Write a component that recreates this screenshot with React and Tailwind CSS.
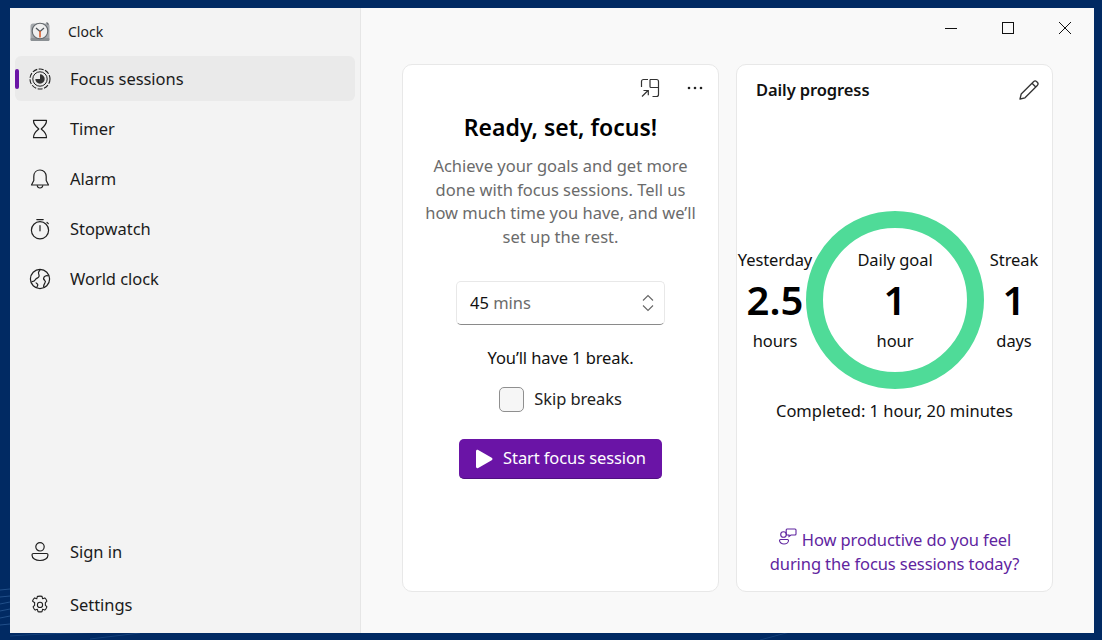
import React from 'react';

const FocusIcon = () => (
  <svg width="24" height="24" viewBox="0 0 24 24" fill="none" stroke="#1f1f1f">
    <circle cx="12" cy="12" r="10" strokeWidth="1.100" strokeDasharray="5 1.500" />
    <circle cx="12" cy="12" r="7.200" strokeWidth="1" />
    <path d="M12 7.300A4.700 4.700 0 1 1 7.300 12H12Z" fill="#333" stroke="none" />
  </svg>
);

const TimerIcon = () => (
  <svg width="24" height="24" viewBox="0 0 24 24" fill="none" stroke="#1f1f1f" strokeWidth="1.200" strokeLinejoin="round">
    <path d="M5.500 3.300h13c.2 3.300-2.300 6.300-5.300 8.700 3 2.400 5.500 5.400 5.300 8.700h-13c-.2-3.300 2.300-6.300 5.300-8.700-3-2.400-5.500-5.400-5.300-8.700Z" />
  </svg>
);

const BellIcon = () => (
  <svg width="24" height="24" viewBox="0 0 24 24" fill="none" stroke="#1f1f1f" strokeWidth="1.200" strokeLinejoin="round">
    <path d="M12 3c-3.700 0-6.200 2.800-6.200 6.500v4L3.500 18h17l-2.300-4.500v-4C18.200 5.800 15.700 3 12 3Z" />
    <path d="M9.200 18.200c.2 1.700 1.300 2.800 2.800 2.800s2.600-1.100 2.800-2.800" />
  </svg>
);

const StopwatchIcon = () => (
  <svg width="24" height="24" viewBox="0 0 24 24" fill="none" stroke="#1f1f1f" strokeWidth="1.200" strokeLinecap="round">
    <circle cx="12" cy="13.300" r="8.600" />
    <path d="M8.800 2.600h6.400M12 8.500v5.300M19 5.300l1.300 1.300" />
  </svg>
);

const GlobeIcon = () => (
  <svg width="24" height="24" viewBox="0 0 24 24" fill="none" stroke="#1f1f1f" strokeWidth="1.200" strokeLinejoin="round">
    <circle cx="12" cy="12" r="9.600" />
    <path d="M3.500 14.500c2 .2 3.300-.5 4-2 .8-1.500 2.800-1.300 3.500-3 .6-1.500-.8-2.800-.5-4 .2-.9 1-1.600 1.800-3" />
    <path d="M20.800 9c-1.800-.6-3.700-.2-4.700 1-1 1.300-.3 2.700.7 3.500.8.600.6 1.800 0 2.700-.7 1-1.200 2.300-1.200 4" />
    <path d="M8.500 21c.3-1.300 1.300-2 1.300-3.200 0-1-1.300-1.300-2-2.300" />
  </svg>
);

const PersonIcon = () => (
  <svg width="24" height="24" viewBox="0 0 24 24" fill="none" stroke="#1f1f1f" strokeWidth="1.200">
    <circle cx="12" cy="6.800" r="4.200" />
    <path d="M5.500 13.500h13c.9 0 1.500.6 1.500 1.500 0 3.300-3.500 5.500-8 5.500s-8-2.200-8-5.500c0-.9.600-1.500 1.500-1.500Z" />
  </svg>
);

const GearIcon = () => (
  <svg width="24" height="24" viewBox="0 0 24 24" fill="none" stroke="#1f1f1f" strokeWidth="1.100" strokeLinejoin="round">
    <path d="M10 3.400c1.300-.3 2.700-.3 4 0l.6 2.300 2.200-.8c1 .8 1.700 2 2.100 3.200l-1.600 1.700c.2.800.2 1.600 0 2.400l1.600 1.700c-.4 1.200-1.100 2.400-2.100 3.200l-2.200-.8-.6 2.300c-1.300.3-2.700.3-4 0l-.6-2.300-2.200.8c-1-.8-1.700-2-2.100-3.200l1.600-1.700c-.2-.8-.2-1.600 0-2.400L4.500 8.100c.4-1.200 1.100-2.400 2.100-3.200l2.200.8.6-2.300Z" />
    <circle cx="12" cy="11.900" r="2.600" />
  </svg>
);

const ClockLogo = () => (
  <svg width="24" height="24" viewBox="0 0 24 24">
    <path d="M2.500 6c0-1.500 1-2.500 2.500-2.500h14c1.500 0 2.500 1 2.500 2.500v13c0 1.300-.8 2-2 2H4.500c-1.200 0-2-.7-2-2Z" fill="#a4a8ac" />
    <rect x="2.500" y="18" width="19" height="3" rx="1.200" fill="#8b9094" />
    <circle cx="12" cy="11" r="7.800" fill="#efefef" stroke="#63686c" strokeWidth="1.100" />
    <path d="M12 11.500 8 8M12 11.500l4-3.500" stroke="#50555a" strokeWidth="1.200" fill="none" />
    <path d="M12 11v6.500" stroke="#d9531e" strokeWidth="1.500" />
    <path d="M18.500 2.500l2 2" stroke="#63686c" strokeWidth="1.200" />
  </svg>
);

const NavItem = ({ icon, label, active, className = '' }) => (
  <div className={`relative flex h-[45px] items-center rounded-md ${active ? 'bg-[#eaeaea]' : ''} ${className}`}>
    {active && <span className="absolute left-0 top-[13px] h-[20px] w-[4px] rounded-full bg-[#6a14a6]" />}
    <span className="ml-[13px] flex w-[24px] justify-center">{icon}</span>
    <span className="ml-[18px] pt-[2px] text-[16.500px] tracking-[-0.05px] text-[#1b1b1b]">{label}</span>
  </div>
);

const Stat = ({ top, value, bottom, className = '' }) => (
  <div className={`flex w-[78px] shrink-0 flex-col items-center ${className}`}>
    <span className="mt-[37px] h-[24px] whitespace-nowrap text-[16.500px] leading-[24px] tracking-[-0.1px] text-[#111]">{top}</span>
    <span className="mt-[2px] h-[52px] text-[40px] font-semibold leading-[52px] text-black">{value}</span>
    <span className="mt-[3px] h-[24px] text-[16.500px] leading-[24px] tracking-[-0.1px] text-[#111]">{bottom}</span>
  </div>
);

const App = () => {
  return (
    <div
      className="relative h-[640px] w-[1102px] overflow-hidden bg-[#012a63] pb-[7px] pl-[10px] pr-[8px] pt-[8px]"
      style={{ fontFamily: '"Noto Sans", "Open Sans", sans-serif' }}
    >
      {/* wallpaper lines */}
      <svg className="absolute bottom-0 left-0" width="1102" height="60" fill="none" stroke="#2f5f9a" strokeWidth="1" opacity="0.7">
        <path d="M0 10l10-1M0 17l10-1M0 24l10-2M0 31l10-2M0 38l10-2M0 45l10-1" />
        <path d="M10 56c40-3 80-3 130-5M90 59l50-6M760 60l30-8" opacity="0.6" />
      </svg>

      <div className="relative flex h-full w-full bg-[#f9f9f9]">
        {/* sidebar */}
        <aside className="flex h-full w-[351px] shrink-0 flex-col border-r border-[#e6e6e6] bg-[#f3f3f3] px-[5px]">
          <div className="flex h-[47px] items-center pl-[13px]">
            <ClockLogo />
            <span className="ml-[16px] text-[14px] text-[#1b1b1b]">Clock</span>
          </div>
          <div className="mt-[1px] flex flex-col gap-[5px]">
            <NavItem icon={<FocusIcon />} label="Focus sessions" active />
            <NavItem icon={<TimerIcon />} label="Timer" />
            <NavItem icon={<BellIcon />} label="Alarm" />
            <NavItem icon={<StopwatchIcon />} label="Stopwatch" />
            <NavItem icon={<GlobeIcon />} label="World clock" />
          </div>
          <div className="mt-auto flex flex-col gap-[8px] pb-[6px]">
            <NavItem icon={<PersonIcon />} label="Sign in" />
            <NavItem icon={<GearIcon />} label="Settings" />
          </div>
        </aside>

        {/* main */}
        <main className="flex min-w-0 flex-1 flex-col">
          <div className="flex h-[56px] shrink-0 items-start justify-end pr-[1px]">
            <button className="flex h-[40px] w-[57px] items-center justify-center">
              <svg width="14" height="14" viewBox="0 0 14 14" stroke="#111" fill="none"><path d="M1 7.500h12" /></svg>
            </button>
            <button className="flex h-[40px] w-[57px] items-center justify-center">
              <svg width="14" height="14" viewBox="0 0 14 14" stroke="#111" fill="none"><rect x="1.500" y="1.500" width="11" height="11" /></svg>
            </button>
            <button className="flex h-[40px] w-[57px] items-center justify-center">
              <svg width="14" height="14" viewBox="0 0 14 14" stroke="#111" fill="none"><path d="M1 1l12 12M13 1 1 13" /></svg>
            </button>
          </div>

          <div className="flex gap-[17px] pl-[41px]">
            {/* focus card */}
            <section className="flex h-[528px] w-[317px] flex-col items-center rounded-[10px] border border-[#e8e8e8] bg-white">
              <div className="flex h-[46px] w-full items-center justify-end gap-[26px] pr-[14px]">
                <svg width="20" height="20" viewBox="0 0 20 20" fill="none" stroke="#333" strokeWidth="1.200">
                  <path d="M8 1.500H3.500c-1.200 0-2 .8-2 2V9" />
                  <path d="M10 1.500h6.500c1.200 0 2 .8 2 2v13c0 1.200-.8 2-2 2h-4" />
                  <path d="M10 1.500v7c0 .6.400 1 1 1h7.500" />
                  <path d="M2 18.500 8 12.500M3.500 12.500h4.800v4.800" />
                </svg>
                <svg width="18" height="18" viewBox="0 0 18 18" fill="#222">
                  <circle cx="3" cy="9" r="1.300" /><circle cx="9" cy="9" r="1.300" /><circle cx="15" cy="9" r="1.300" />
                </svg>
              </div>
              <h1 className="-mt-[1px] h-[34px] text-[23px] font-semibold leading-[34px] text-black">Ready, set, focus!</h1>
              <p className="mt-[10px] w-[290px] text-center text-[16.500px] leading-[23.500px] text-[#6b6b6b]">
                Achieve your goals and get more<br />
                done with focus sessions. Tell us<br />
                how much time you have, and we’ll<br />
                set up the rest.
              </p>
              <div className="mt-[33px] flex h-[44px] w-[209px] items-center justify-between rounded-[5px] border border-[#e8e8e8] border-b-[#8a8a8a] bg-white pl-[13px] pr-[10px]">
                <span className="pt-[1px] text-[16.500px] text-[#111]">45 <span className="text-[#6b6b6b]">mins</span></span>
                <svg width="12" height="18" viewBox="0 0 12 18" fill="none" stroke="#666" strokeWidth="1.100">
                  <path d="M1 6.500 6 1.500l5 5M1 11.500l5 5 5-5" />
                </svg>
              </div>
              <p className="mt-[21px] h-[24px] text-[16.500px] leading-[24px] tracking-[-0.1px] text-[#111]">You’ll have 1 break.</p>
              <div className="mt-[17px] flex h-[25px] items-center gap-[10px]">
                <span className="h-[25px] w-[25px] rounded-[5px] border border-[#8f8f8f] bg-[#f6f6f6]" />
                <span className="text-[16.500px] tracking-[-0.1px] text-[#222]">Skip breaks</span>
              </div>
              <button className="mt-[27px] flex h-[40px] w-[203px] items-center justify-center gap-[10px] rounded-[5px] border-b border-[#4f0f80] bg-[#6a14a6] text-[16.500px] tracking-[-0.1px] text-white">
                <svg width="18" height="20" viewBox="0 0 18 20" fill="white"><path d="M1 2.200C1 1 2.200.4 3.200 1l13.500 7.800c1 .6 1 1.900 0 2.400L3.200 19c-1 .6-2.200 0-2.200-1.200Z" /></svg>
                Start focus session
              </button>
            </section>

            {/* progress card */}
            <section className="flex h-[528px] w-[317px] flex-col rounded-[10px] border border-[#e8e8e8] bg-white">
              <div className="flex h-[50px] shrink-0 items-center justify-between pl-[19px] pr-[12px]">
                <h2 className="text-[16.500px] font-semibold tracking-[-0.1px] text-[#111]">Daily progress</h2>
                <svg width="22" height="22" viewBox="0 0 22 22" fill="none" stroke="#333" strokeWidth="1.300" strokeLinejoin="round">
                  <path d="M2 20l1.200-5L15.500 2.700c.9-.9 2.300-.9 3.200 0l.6.600c.9.900.9 2.300 0 3.200L7 18.800Z" />
                  <path d="M14 4.200l3.800 3.800" />
                </svg>
              </div>
              <div className="mt-[96px] flex justify-center">
                <Stat top="Yesterday" value="2.5" bottom="hours" className="-mr-[8px]" />
                <div className="relative z-10 flex h-[178px] w-[178px] shrink-0 flex-col items-center rounded-full border-[17px] border-[#4fdb98]">
                  <span className="mt-[20px] h-[24px] text-[16.500px] leading-[24px] tracking-[-0.1px] text-[#111]">Daily goal</span>
                  <span className="mt-[2px] h-[52px] text-[40px] font-semibold leading-[52px] text-black">1</span>
                  <span className="mt-[3px] h-[24px] text-[16.500px] leading-[24px] tracking-[-0.1px] text-[#111]">hour</span>
                </div>
                <Stat top="Streak" value="1" bottom="days" className="-ml-[9px]" />
              </div>
              <p className="mt-[9px] text-center text-[16.500px] leading-[26px] text-[#111]">Completed: 1 hour, 20 minutes</p>
              <div className="mt-auto pb-[15px] text-center text-[16.500px] leading-[24px] tracking-[-0.1px] text-[#5f259f]">
                <p>
                  <svg className="mr-[4px] inline-block align-[-1px]" width="20" height="20" viewBox="0 0 20 20" fill="none" stroke="#5f259f" strokeWidth="1.100">
                    <circle cx="5.500" cy="7.500" r="2.800" />
                    <path d="M2.500 12.500h7c.6 0 1 .4 1 1 0 2-2.200 3.500-4.500 3.500s-4.500-1.500-4.500-3.500c0-.6.400-1 1-1Z" />
                    <path d="M9 2h8c.6 0 1 .4 1 1v4c0 .6-.4 1-1 1h-4l-2 1.500V8h-2c-.5 0-.8-.4-.8-1V3c0-.6.300-1 .8-1Z" />
                  </svg>
                  How productive do you feel
                </p>
                <p>during the focus sessions today?</p>
              </div>
            </section>
          </div>
        </main>
      </div>
    </div>
  );
};

export default App;
